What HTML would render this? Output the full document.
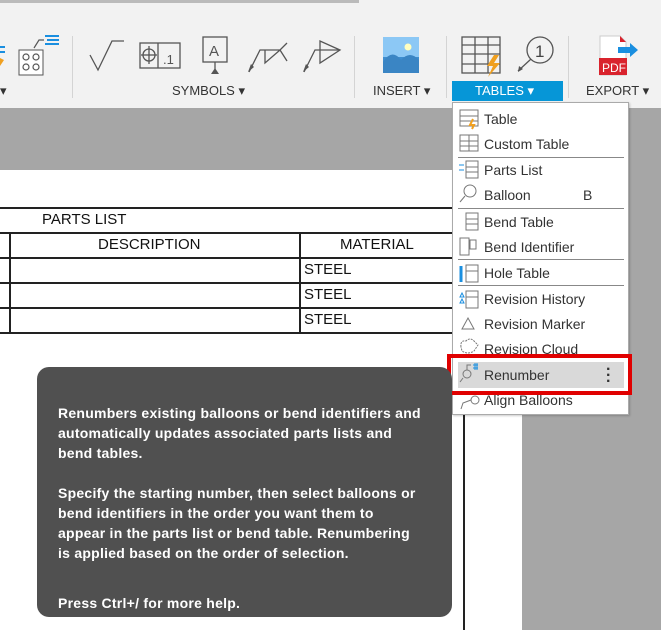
<!DOCTYPE html>
<html><head><style>
*{margin:0;padding:0;box-sizing:border-box}
body{width:661px;height:630px;overflow:hidden;position:relative;background:#a6a6a6;font-family:"Liberation Sans",sans-serif}
.abs{position:absolute}
#tb{left:0;top:0;width:661px;height:108px;background:#f2f2f2}
.lbl{position:absolute;top:83px;font-size:13px;color:#333}
.sep{position:absolute;top:36px;width:1px;height:62px;background:#d4d4d4}
#paper{left:0;top:170px;width:522px;height:460px;background:#fff}
.h{position:absolute;height:1.5px;background:#222}
.v{position:absolute;width:1.5px;background:#222}
.t{position:absolute;font-size:15px;color:#111}
#menu{left:452px;top:102px;width:177px;height:313px;background:#fff;border:1px solid #aaa;box-shadow:1px 1px 2px rgba(0,0,0,.2)}
.mi{position:absolute;left:31px;font-size:14px;color:#333}
.ms{position:absolute;left:5px;width:166px;height:1px;background:#888}
#tip{left:37px;top:367px;width:415px;height:250px;background:#505050;border-radius:12px;color:#fff;font-weight:bold;font-size:14px;line-height:20px;padding:36px 0 0 21px;white-space:nowrap;letter-spacing:0.25px}
</style></head><body>
<div id="tb" class="abs">
<div class="abs" style="left:0;top:0;width:359px;height:3px;background:#bbb"></div>
<div class="sep" style="left:72px"></div><div class="sep" style="left:354px"></div><div class="sep" style="left:446px"></div><div class="sep" style="left:568px"></div>
<svg class="abs" style="left:0;top:0" width="661" height="108">
<g stroke="#1a8fe0" stroke-width="2"><line x1="0" y1="47" x2="5" y2="47"/><line x1="0" y1="52" x2="5" y2="52"/><line x1="45" y1="36" x2="59" y2="36"/><line x1="47" y1="40" x2="59" y2="40"/><line x1="45" y1="44" x2="59" y2="44"/></g>
<path d="M0 58 L4 60 L0 66" fill="#f0a020"/>
<rect x="19" y="50" width="24" height="25" fill="#fff" stroke="#555"/>
<g fill="none" stroke="#555" stroke-width="1.2"><circle cx="26" cy="57" r="3"/><circle cx="36" cy="57" r="3"/><circle cx="26" cy="67" r="3"/><circle cx="36" cy="67" r="3"/><path d="M44 40 L39 40 L34 48"/></g>
<g fill="none" stroke="#555" stroke-width="1.3"><path d="M90 55 L98 70 L112 41 L124 41"/>
<rect x="140" y="43" width="40" height="25"/><line x1="158" y1="43" x2="158" y2="68"/><circle cx="149" cy="55" r="6"/><line x1="149" y1="46" x2="149" y2="64"/><line x1="141" y1="55" x2="157" y2="55"/>
<rect x="203" y="37" width="24" height="25"/><line x1="215" y1="62" x2="215" y2="69"/>
<path d="M249 72 L260 50 L280 50 M265 50 L265 63 L280 50 L287 43 M280 50 L287 61"/>
<path d="M304 72 L315 50 L340 50 M320 50 L320 63 L340 50 L320 41 Z"/></g>
<text x="163" y="64" font-size="13" fill="#555">.1</text><text x="209" y="56" font-size="15" fill="#555">A</text>
<path d="M211 74 L215 68 L219 74Z" fill="#555"/>
<path d="M248 72 L251 64 L254 67Z M303 72 L306 64 L309 67Z" fill="#555"/>
<rect x="383" y="37" width="36" height="36" fill="#3e8ed0"/><rect x="383" y="37" width="36" height="20" fill="#8cc8f5"/>
<path d="M383 62 Q392 48 401 60 Q410 50 419 60 L419 73 L383 73Z" fill="#3a85c4"/><circle cx="408" cy="47" r="3.5" fill="#ffffc0"/>
<g fill="none" stroke="#555" stroke-width="1.3"><rect x="462" y="37" width="38" height="36"/><line x1="462" y1="45" x2="500" y2="45"/><line x1="462" y1="54" x2="500" y2="54"/><line x1="462" y1="64" x2="500" y2="64"/><line x1="475" y1="37" x2="475" y2="73"/><line x1="488" y1="37" x2="488" y2="73"/>
<circle cx="540" cy="50" r="13"/><path d="M531 59 L518 71"/></g>
<path d="M518 72 L519 66 L523 69Z" fill="#555"/>
<text x="535" y="57" font-size="17" fill="#444">1</text>
<path d="M494 55 L487 66 L493 66 L488 77 L500 63 L494 63 L499 55Z" fill="#f0a020"/>
</svg>
<svg class="abs" style="left:598px;top:35px" width="42" height="42"><path d="M2 1 L22 1 L28 7 L28 40 L2 40Z" fill="#fff" stroke="#ccc"/><path d="M22 1 L28 7 L22 7Z" fill="#d9232d"/><rect x="1" y="23" width="28" height="17" fill="#d9232d"/><text x="4" y="37" font-size="12" fill="#fff">PDF</text><path d="M20 12 L32 12 L32 8 L40 15 L32 22 L32 18 L20 18Z" fill="#1a8fe0"/></svg>
<div class="lbl" style="left:0">▾</div>
<div class="lbl" style="left:172px">SYMBOLS ▾</div>
<div class="lbl" style="left:373px">INSERT ▾</div>
<div class="abs" style="left:452px;top:81px;width:111px;height:20px;background:#0696d7"></div>
<div class="lbl" style="left:475px;color:#fff">TABLES ▾</div>
<div class="lbl" style="left:586px">EXPORT ▾</div>
</div>
<div id="paper" class="abs"></div>
<div class="h" style="left:0;top:207px;width:463px"></div>
<div class="h" style="left:0;top:232px;width:463px"></div>
<div class="h" style="left:0;top:257px;width:463px"></div>
<div class="h" style="left:0;top:282px;width:463px"></div>
<div class="h" style="left:0;top:307px;width:463px"></div>
<div class="h" style="left:0;top:332px;width:463px"></div>
<div class="v" style="left:9px;top:232px;height:100px"></div>
<div class="v" style="left:299px;top:232px;height:100px"></div>
<div class="v" style="left:463px;top:207px;height:423px"></div>
<div class="t" style="left:42px;top:211px">PARTS LIST</div>
<div class="t" style="left:98px;top:236px">DESCRIPTION</div>
<div class="t" style="left:340px;top:236px">MATERIAL</div>
<div class="t" style="left:304px;top:261px">STEEL</div>
<div class="t" style="left:304px;top:286px">STEEL</div>
<div class="t" style="left:304px;top:311px">STEEL</div>
<div id="menu" class="abs">
<div class="abs" style="left:5px;top:259px;width:166px;height:26px;background:#d9d9d9"></div>
<div class="ms" style="top:54px"></div><div class="ms" style="top:105px"></div><div class="ms" style="top:156px"></div><div class="ms" style="top:182px"></div>
<svg class="abs" style="left:5px;top:4px" width="26" height="306" fill="none" stroke="#777" stroke-width="1">
<rect x="2" y="3" width="18" height="16"/><line x1="2" y1="9" x2="20" y2="9"/><line x1="2" y1="14" x2="20" y2="14"/><path d="M15 12 L12 18 L16 18 L14 22" stroke="#f0a020" stroke-width="2"/>
<rect x="2" y="28" width="18" height="16"/><line x1="2" y1="34" x2="20" y2="34"/><line x1="2" y1="39" x2="20" y2="39"/><line x1="11" y1="28" x2="11" y2="44"/>
<rect x="8" y="54" width="12" height="17"/><line x1="8" y1="60" x2="20" y2="60"/><line x1="8" y1="65" x2="20" y2="65"/><line x1="1" y1="58" x2="6" y2="58" stroke="#1a8fe0"/><line x1="1" y1="63" x2="6" y2="63" stroke="#1a8fe0"/>
<circle cx="12" cy="84" r="6"/><path d="M7 89 L2 95"/>
<rect x="8" y="106" width="12" height="17"/><line x1="8" y1="112" x2="20" y2="112"/><line x1="8" y1="117" x2="20" y2="117"/>
<rect x="2" y="131" width="9" height="17"/><rect x="12" y="133" width="6" height="9"/>
<rect x="8" y="158" width="12" height="17"/><line x1="8" y1="164" x2="20" y2="164"/><line x1="3" y1="159" x2="3" y2="175" stroke="#1a8fe0" stroke-width="3"/>
<rect x="8" y="184" width="12" height="17"/><line x1="8" y1="190" x2="20" y2="190"/><path d="M2 190 L4 186 L6 190Z M2 196 L4 192 L6 196Z" stroke="#1a8fe0"/>
<path d="M4 222 L10 211 L16 222Z"/>
<path d="M3 240 Q2 233 8 234 Q12 230 16 234 L20 238 L16 244 Q10 248 4 244Z" stroke-dasharray="2 1"/>
<circle cx="9" cy="267" r="4"/><path d="M5 271 L2 275 M9 263 L9 258 L13 258"/><path d="M15 258 h5 M15 261 h5 M17 256 v7 M19 256 v7" stroke="#1a8fe0"/>
<circle cx="17" cy="293" r="4"/><path d="M13 293 L5 296 L3 302"/>
</svg>
<div class="mi" style="top:8px">Table</div>
<div class="mi" style="top:33px">Custom Table</div>
<div class="mi" style="top:59px">Parts List</div>
<div class="mi" style="top:84px">Balloon</div><div class="mi" style="top:84px;left:130px">B</div>
<div class="mi" style="top:111px">Bend Table</div>
<div class="mi" style="top:136px">Bend Identifier</div>
<div class="mi" style="top:162px">Hole Table</div>
<div class="mi" style="top:188px">Revision History</div>
<div class="mi" style="top:213px">Revision Marker</div>
<div class="mi" style="top:238px">Revision Cloud</div>
<div class="mi" style="top:264px">Renumber</div>
<div class="mi" style="top:264px;left:153px;font-weight:bold;line-height:6px;font-size:16px">·<br>·<br>·</div>
<div class="mi" style="top:289px">Align Balloons</div>
</div>
<div class="abs" style="left:447px;top:354px;width:185px;height:41px;border:4px solid #e00000"></div>
<div id="tip" class="abs">Renumbers existing balloons or bend identifiers and<br>automatically updates associated parts lists and<br>bend tables.<br><br>Specify the starting number, then select balloons or<br>bend identifiers in the order you want them to<br>appear in the parts list or bend table. Renumbering<br>is applied based on the order of selection.<br><br><div style="margin-top:10px">Press Ctrl+/ for more help.</div></div>
</body></html>
